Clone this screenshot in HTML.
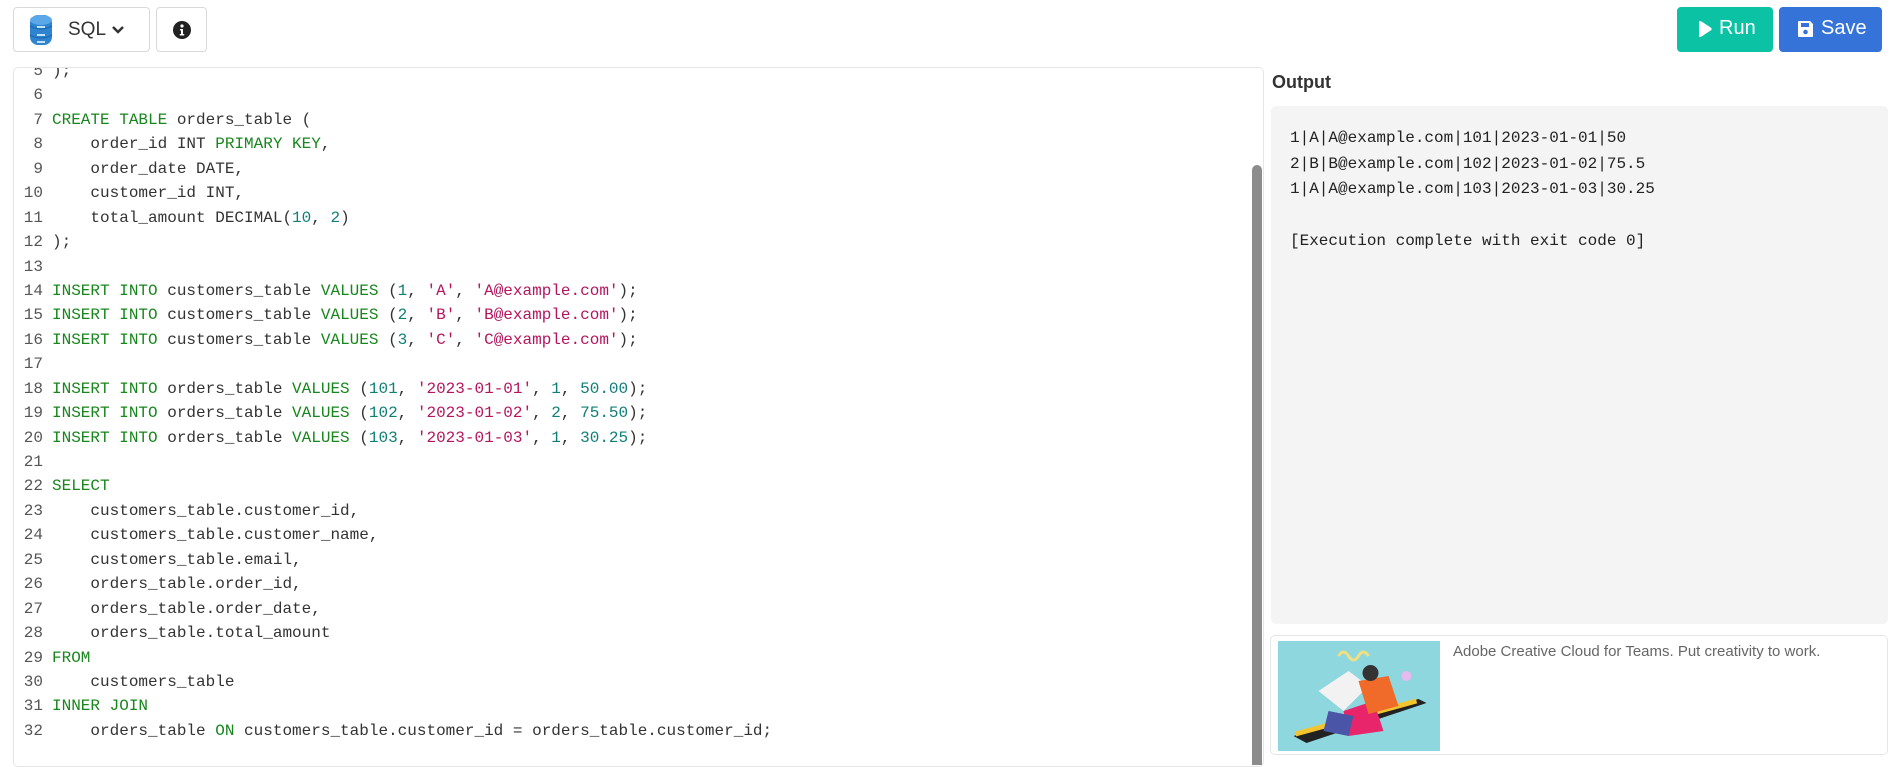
<!DOCTYPE html>
<html><head><meta charset="utf-8"><style>
*{box-sizing:border-box;margin:0;padding:0}
body{width:1891px;height:743px;overflow:hidden;background:#fff;font-family:"Liberation Sans",sans-serif;position:relative}
.btn{position:absolute;top:7px;height:45px;border-radius:4px}
.sql{left:13px;width:137px;border:1px solid #d9d9d9;background:#fff}
.info{left:156px;width:51px;border:1px solid #d9d9d9;background:#fff}
.run{left:1677px;width:96px;background:#0bc2a5;color:#fff;font-size:20px}
.save{left:1779px;width:103px;background:#3573d9;color:#fff;font-size:20px}
.editor{position:absolute;left:13px;top:67px;width:1251px;height:700px;border:1px solid #e6e6e6;border-radius:5px;overflow:hidden}
.code{position:absolute;left:0;top:-9px;font-family:"Liberation Mono",monospace;font-size:16px;line-height:24.44px;color:#333;white-space:pre}
.ln{display:inline-block;width:29px;text-align:right;color:#555;margin-right:9px}
.k{color:#17861c}.s{color:#b5155e}.n{color:#0f7f76}
.thumb{position:absolute;left:1252px;top:165px;width:10px;height:600px;background:#8c8c8c;border-radius:5px 5px 0 0}
.out-t{position:absolute;left:1272px;top:72px;font-size:18px;font-weight:bold;color:#333}
.out{position:absolute;left:1271px;top:106px;width:617px;height:518px;background:#f4f4f4;border-radius:5px;font-family:"Liberation Mono",monospace;font-size:16px;line-height:25.7px;color:#222;padding:20px 0 0 19px;white-space:pre}
.ad{position:absolute;left:1270px;top:635px;width:618px;height:120px;border:1px solid #e6e6e6;border-radius:5px}
.img{position:absolute;left:1278px;top:641px;width:162px;height:110px;background:#8ed7df;overflow:hidden}
.adt{position:absolute;left:1453px;top:643px;font-size:15px;color:#666}
</style></head><body>
<div class="btn sql">
<svg style="position:absolute;left:15px;top:6px" width="24" height="32" viewBox="0 0 24 32"><rect x="1" y="1" width="22" height="30" rx="8" fill="#2f84d0"/><ellipse cx="12" cy="6" rx="11" ry="5" fill="#5aa8e8"/><path d="M1 12q11 6 22 0M1 21q11 6 22 0" stroke="#1d65ad" fill="none"/><g fill="#bfe3ff"><rect x="8" y="12" width="8" height="2"/><rect x="8" y="20" width="8" height="2"/><rect x="8" y="27" width="8" height="2"/></g></svg>
<span style="position:absolute;left:54px;top:11px;font-size:19px;color:#333">SQL</span>
<svg style="position:absolute;left:97px;top:17px" width="14" height="10" viewBox="0 0 14 10"><path d="M2 2l5 5 5-5" stroke="#333" stroke-width="2.5" fill="none"/></svg>
</div>
<div class="btn info"><svg style="position:absolute;left:16px;top:13px" width="18" height="18" viewBox="0 0 18 18"><circle cx="9" cy="9" r="9" fill="#222"/><circle cx="9" cy="5" r="1.6" fill="#fff"/><path d="M7 8h3v5h1.2v1.5H6.8V13H8V9.5H7z" fill="#fff"/></svg></div>
<div class="btn run"><svg style="position:absolute;left:21px;top:13px" width="14" height="18" viewBox="0 0 14 18"><path d="M1 2.5Q1 0 3.5 1.5L13 7.7Q14.5 9 13 10.3L3.5 16.5Q1 18 1 15.5z" fill="#fff"/></svg><span style="position:absolute;left:42px;top:10px">Run</span></div>
<div class="btn save"><svg style="position:absolute;left:18px;top:13px" width="17" height="18" viewBox="0 0 17 18"><path d="M2 1h11l3 3v12a1 1 0 0 1-1 1H2a1 1 0 0 1-1-1V2a1 1 0 0 1 1-1z" fill="#fff"/><rect x="4" y="3" width="8" height="4" fill="#3573d9"/><circle cx="8.5" cy="12" r="2.3" fill="#3573d9"/></svg><span style="position:absolute;left:42px;top:10px">Save</span></div>
<div class="editor"><div class="code"><span class="ln">5</span>);
<span class="ln">6</span>
<span class="ln">7</span><span class="k">CREATE TABLE</span> orders_table (
<span class="ln">8</span>    order_id INT <span class="k">PRIMARY KEY</span>,
<span class="ln">9</span>    order_date DATE,
<span class="ln">10</span>    customer_id INT,
<span class="ln">11</span>    total_amount DECIMAL(<span class="n">10</span>, <span class="n">2</span>)
<span class="ln">12</span>);
<span class="ln">13</span>
<span class="ln">14</span><span class="k">INSERT INTO</span> customers_table <span class="k">VALUES</span> (<span class="n">1</span>, <span class="s">'A'</span>, <span class="s">'A@example.com'</span>);
<span class="ln">15</span><span class="k">INSERT INTO</span> customers_table <span class="k">VALUES</span> (<span class="n">2</span>, <span class="s">'B'</span>, <span class="s">'B@example.com'</span>);
<span class="ln">16</span><span class="k">INSERT INTO</span> customers_table <span class="k">VALUES</span> (<span class="n">3</span>, <span class="s">'C'</span>, <span class="s">'C@example.com'</span>);
<span class="ln">17</span>
<span class="ln">18</span><span class="k">INSERT INTO</span> orders_table <span class="k">VALUES</span> (<span class="n">101</span>, <span class="s">'2023-01-01'</span>, <span class="n">1</span>, <span class="n">50.00</span>);
<span class="ln">19</span><span class="k">INSERT INTO</span> orders_table <span class="k">VALUES</span> (<span class="n">102</span>, <span class="s">'2023-01-02'</span>, <span class="n">2</span>, <span class="n">75.50</span>);
<span class="ln">20</span><span class="k">INSERT INTO</span> orders_table <span class="k">VALUES</span> (<span class="n">103</span>, <span class="s">'2023-01-03'</span>, <span class="n">1</span>, <span class="n">30.25</span>);
<span class="ln">21</span>
<span class="ln">22</span><span class="k">SELECT</span>
<span class="ln">23</span>    customers_table.customer_id,
<span class="ln">24</span>    customers_table.customer_name,
<span class="ln">25</span>    customers_table.email,
<span class="ln">26</span>    orders_table.order_id,
<span class="ln">27</span>    orders_table.order_date,
<span class="ln">28</span>    orders_table.total_amount
<span class="ln">29</span><span class="k">FROM</span>
<span class="ln">30</span>    customers_table
<span class="ln">31</span><span class="k">INNER JOIN</span>
<span class="ln">32</span>    orders_table <span class="k">ON</span> customers_table.customer_id = orders_table.customer_id;</div></div>
<div class="thumb"></div>
<div class="out-t">Output</div>
<div class="out">1|A|A@example.com|101|2023-01-01|50
2|B|B@example.com|102|2023-01-02|75.5
1|A|A@example.com|103|2023-01-03|30.25

[Execution complete with exit code 0]</div>
<div class="ad"></div>
<div class="img"><svg width="162" height="110" viewBox="0 0 161 110"><path d="M15 95L140 58l8 4-120 40z" fill="#222"/><path d="M17 93L138 60" stroke="#f4c430" stroke-width="5"/><path d="M40 50l30-20 20 15-25 25z" fill="#f2f2f2"/><path d="M65 70l30-10 10 30-35 5z" fill="#e8256b"/><path d="M80 40l30 -5 10 30-30 8z" fill="#f06a2a"/><circle cx="92" cy="32" r="8" fill="#333"/><path d="M50 70l25 5-5 20-25-5z" fill="#4a55a8"/><path d="M60 15q5-8 10 0t10 0t10 0" stroke="#f0e080" stroke-width="3" fill="none"/><circle cx="128" cy="35" r="5" fill="#e8b8f0"/></svg></div>
<div class="adt">Adobe Creative Cloud for Teams. Put creativity to work.</div>
</body></html>
